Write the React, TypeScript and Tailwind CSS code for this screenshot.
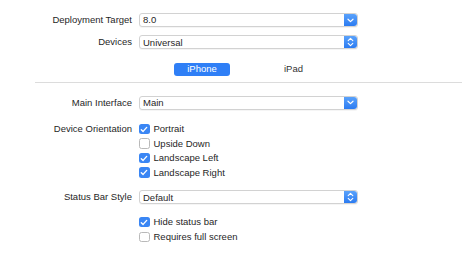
import React from "react";

type Kind = "down" | "updown";

function Chevron({ kind }: { kind: Kind }) {
  return (
    <div className="flex h-full w-[13px] items-center justify-center rounded-r-[3px] bg-gradient-to-b from-[#5aa2fb] to-[#2b7bf1]">
      {kind === "down" ? (
        <svg width="7" height="5" viewBox="0 0 7 5" fill="none">
          <path d="M1 1.2 L3.5 3.6 L6 1.2" stroke="white" strokeWidth="1.2" strokeLinecap="round" strokeLinejoin="round" />
        </svg>
      ) : (
        <svg width="7" height="10" viewBox="0 0 7 10" fill="none">
          <path d="M1.2 3.6 L3.5 1.4 L5.8 3.6" stroke="white" strokeWidth="1.1" strokeLinecap="round" strokeLinejoin="round" />
          <path d="M1.2 6.4 L3.5 8.6 L5.8 6.4" stroke="white" strokeWidth="1.1" strokeLinecap="round" strokeLinejoin="round" />
        </svg>
      )}
    </div>
  );
}

function Select({ value, kind }: { value: string; kind: Kind }) {
  return (
    <div className="flex h-[14px] w-[219px] items-center rounded-[3px] border border-[#d2d2d2] bg-white shadow-[0_1px_0_rgba(0,0,0,0.04)]">
      <span className="flex-1 pl-[3px] leading-none">{value}</span>
      <Chevron kind={kind} />
    </div>
  );
}

function Check({ label, checked }: { label: string; checked: boolean }) {
  return (
    <div className="flex h-[14.5px] items-center gap-[4px]">
      {checked ? (
        <div className="flex h-[10.5px] w-[10.5px] items-center justify-center rounded-[2.5px] bg-[#3a86f4]">
          <svg width="8" height="7" viewBox="0 0 8 7" fill="none">
            <path d="M1.3 3.7 L3.1 5.4 L6.7 1.4" stroke="white" strokeWidth="1.4" strokeLinecap="round" strokeLinejoin="round" />
          </svg>
        </div>
      ) : (
        <div className="h-[10.5px] w-[10.5px] rounded-[2.5px] border border-[#b9b9b9] bg-white" />
      )}
      <span className="leading-none">{label}</span>
    </div>
  );
}

function Row({ label, children, className = "" }: { label?: string; children: React.ReactNode; className?: string }) {
  return (
    <div className={"flex " + className}>
      <div className="w-[132px] shrink-0 text-right">{label}</div>
      <div className="ml-[7px]">{children}</div>
    </div>
  );
}

export default function App() {
  return (
    <div
      className="h-[253px] w-[474px] overflow-hidden bg-white pt-[13px] text-[9.5px] text-[#1f1f1f]"
      style={{ fontFamily: '"Liberation Sans", Arial, sans-serif' }}
    >
      <Row label="Deployment Target" className="items-center">
        <Select value="8.0" kind="down" />
      </Row>
      <Row label="Devices" className="mt-[8px] items-center">
        <Select value="Universal" kind="updown" />
      </Row>

      {/* Device family tabs */}
      <div className="mt-[13px] flex h-[13px] items-center pl-[174px]">
        <div className="flex h-[13px] w-[56px] items-center justify-center rounded-[3px] bg-[#2f7ff6] text-white">
          iPhone
        </div>
        <span className="ml-[54px] text-[#333]">iPad</span>
      </div>

      <div className="ml-[35px] mt-[6px] h-px w-[427px] bg-[#dcdcdc]" />

      <Row label="Main Interface" className="mt-[13px] items-center">
        <Select value="Main" kind="down" />
      </Row>

      <Row label="Device Orientation" className="mt-[12px]">
        <div className="flex flex-col">
          <Check label="Portrait" checked />
          <Check label="Upside Down" checked={false} />
          <Check label="Landscape Left" checked />
          <Check label="Landscape Right" checked />
        </div>
      </Row>

      <Row label="Status Bar Style" className="mt-[10.5px] items-center">
        <Select value="Default" kind="updown" />
      </Row>

      <Row className="mt-[10px]">
        <div className="flex flex-col">
          <div className="flex h-[15px] items-center">
            <Check label="Hide status bar" checked />
          </div>
          <div className="flex h-[15px] items-center">
            <Check label="Requires full screen" checked={false} />
          </div>
        </div>
      </Row>
    </div>
  );
}
